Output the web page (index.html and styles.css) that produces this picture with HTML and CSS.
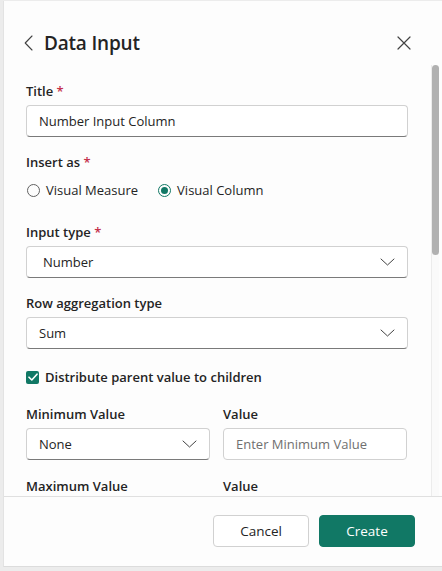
FILE: index.html
```html
<!DOCTYPE html>
<html lang="en">
<head>
<meta charset="utf-8">
<title>Data Input</title>
<link rel="stylesheet" href="styles.css">
</head>
<body>
<div class="panel">
  <header class="header">
    <span class="icon back">
      <svg width="10" height="16" viewBox="0 0 10 16"><path d="M8 1 L1.2 8 L8 15" fill="none" stroke="#424242" stroke-width="1.1" stroke-linecap="round" stroke-linejoin="round"/></svg>
    </span>
    <h1 class="title">Data Input</h1>
    <span class="icon close">
      <svg width="14" height="14" viewBox="0 0 14 14"><path d="M1 1 L13 13 M13 1 L1 13" fill="none" stroke="#424242" stroke-width="1.2" stroke-linecap="round"/></svg>
    </span>
  </header>

  <div class="body">
    <div class="content">
      <div class="field">
        <div class="label">Title <span class="req">*</span></div>
        <div class="input strong">Number Input Column</div>
      </div>

      <div class="field">
        <div class="label">Insert as <span class="req">*</span></div>
        <div class="radios">
          <span class="radio"><span class="dot"></span>Visual Measure</span>
          <span class="radio checked"><span class="dot"></span>Visual Column</span>
        </div>
      </div>

      <div class="field">
        <div class="label">Input type <span class="req">*</span></div>
        <div class="select wide-pad">
          <span>Number</span>
          <svg class="chev" width="15" height="8" viewBox="0 0 15 8"><path d="M1 1 L7.5 7 L14 1" fill="none" stroke="#424242" stroke-width="1" stroke-linecap="round" stroke-linejoin="round"/></svg>
        </div>
      </div>

      <div class="field">
        <div class="label">Row aggregation type</div>
        <div class="select">
          <span>Sum</span>
          <svg class="chev" width="15" height="8" viewBox="0 0 15 8"><path d="M1 1 L7.5 7 L14 1" fill="none" stroke="#424242" stroke-width="1" stroke-linecap="round" stroke-linejoin="round"/></svg>
        </div>
      </div>

      <div class="check-row">
        <span class="checkbox">
          <svg width="10" height="8" viewBox="0 0 10 8"><path d="M1 4.2 L3.8 7 L9 1.2" fill="none" stroke="#ffffff" stroke-width="1.6" stroke-linecap="round" stroke-linejoin="round"/></svg>
        </span>
        <span class="check-label">Distribute parent value to children</span>
      </div>

      <div class="pair">
        <div class="field">
          <div class="label">Minimum Value</div>
          <div class="select">
            <span>None</span>
            <svg class="chev" width="15" height="8" viewBox="0 0 15 8"><path d="M1 1 L7.5 7 L14 1" fill="none" stroke="#424242" stroke-width="1" stroke-linecap="round" stroke-linejoin="round"/></svg>
          </div>
        </div>
        <div class="field">
          <div class="label">Value</div>
          <div class="input placeholder">Enter Minimum Value</div>
        </div>
      </div>

      <div class="pair">
        <div class="field">
          <div class="label">Maximum Value</div>
        </div>
        <div class="field">
          <div class="label">Value</div>
        </div>
      </div>
    </div>
    <div class="scrollbar"><div class="thumb"></div></div>
  </div>

  <footer class="footer">
    <button class="btn secondary">Cancel</button>
    <button class="btn primary">Create</button>
  </footer>
</div>
</body>
</html>
```

FILE: styles.css
```css
* { box-sizing: border-box; }

html, body {
  margin: 0;
  padding: 0;
  background: #ececec;
}

body {
  font-family: "Open Sans", "Noto Sans", sans-serif;
  font-size: 13px;
  color: #242424;
  width: 442px;
  height: 571px;
  overflow: hidden;
}

.panel {
  margin: 1px 0 0 3px;
  height: 566px;
  background: #fdfdfd;
  border-left: 1px solid #e3e3e3;
  border-bottom: 1px solid #dcdcdc;
  display: flex;
  flex-direction: column;
}

.header {
  height: 64px;
  flex: none;
  display: flex;
  align-items: center;
  padding: 20px 31px 0 19px;
}

.icon {
  display: flex;
  align-items: center;
  justify-content: center;
}

.back { width: 12px; margin-right: 9px; }

.title {
  margin: 0;
  font-size: 19px;
  font-weight: 600;
  color: #242424;
  flex: 1;
  letter-spacing: -0.2px;
}

.body {
  position: relative;
  height: 432px;
  flex: none;
  overflow: hidden;
  border-bottom: 1px solid #e0e0e0;
}

.content {
  padding: 16px 34px 0 22px;
}

.field { margin-bottom: 15px; }

.label {
  font-weight: 600;
  line-height: 20px;
  margin-bottom: 4px;
  color: #242424;
}

.req { color: #c4314b; }

.input,
.select {
  height: 32px;
  border: 1px solid #d1d1d1;
  border-radius: 4px;
  background: #ffffff;
  display: flex;
  align-items: center;
  padding: 0 12px;
  color: #242424;
}

.input.strong,
.select {
  border-bottom-color: #7a7a7a;
}

.select {
  justify-content: space-between;
}

.select.wide-pad { padding-left: 16px; }

.chev { flex: none; }

.placeholder { color: #707070; }

.radios {
  display: flex;
  align-items: center;
  gap: 19px;
  margin-top: 8px;
  height: 20px;
  margin-bottom: 22px;
}

.radio {
  display: flex;
  align-items: center;
  gap: 6px;
}

.dot {
  width: 13px;
  height: 13px;
  border-radius: 50%;
  border: 1px solid #616161;
  display: flex;
  align-items: center;
  justify-content: center;
  margin-left: 1px;
}

.radio.checked .dot { border-color: #117865; }

.radio.checked .dot::after {
  content: "";
  width: 7px;
  height: 7px;
  border-radius: 50%;
  background: #117865;
}

.check-row {
  display: flex;
  align-items: center;
  gap: 6px;
  height: 20px;
  margin-top: 18px;
  margin-bottom: 17px;
}

.checkbox {
  width: 13px;
  height: 13px;
  border-radius: 2px;
  background: #117865;
  display: flex;
  align-items: center;
  justify-content: center;
}

.check-label { font-weight: 600; }

.pair {
  display: grid;
  grid-template-columns: 184px 184px;
  gap: 13px;
}

.pair .field { margin-bottom: 16px; }

.scrollbar {
  position: absolute;
  top: 0;
  right: 3px;
  width: 8px;
  height: 100%;
  background: #fafafa;
  border-left: 1px solid #ececec;
}

.thumb {
  width: 7px;
  height: 190px;
  border-radius: 4px;
  background: #b1b1b1;
}

.footer {
  flex: 1;
  display: flex;
  justify-content: flex-end;
  align-items: flex-start;
  gap: 10px;
  padding: 18px 27px 0 0;
}

.btn {
  width: 96px;
  height: 32px;
  border-radius: 4px;
  font-family: inherit;
  font-size: 13.5px;
  cursor: pointer;
}

.secondary {
  background: #ffffff;
  border: 1px solid #d1d1d1;
  color: #242424;
}

.primary {
  background: #117865;
  border: 1px solid #117865;
  color: #ffffff;
}
```
